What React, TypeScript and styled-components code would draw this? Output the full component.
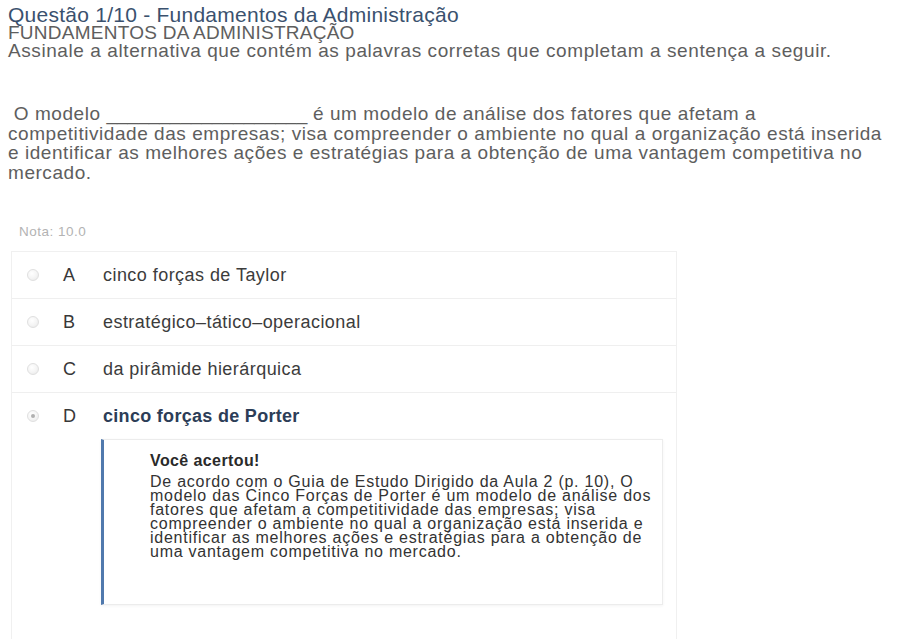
import React from "react";
import styled, { createGlobalStyle } from "styled-components";

const GlobalStyle = createGlobalStyle`
  html, body { margin: 0; padding: 0; background: #ffffff; }
  body { font-family: "Liberation Sans", Arial, sans-serif; }
`;

const Page = styled.main`
  box-sizing: border-box;
  width: 903px;
  min-height: 100vh;
  padding: 6px 8px 0 8px;
  display: flex;
  flex-direction: column;
  align-items: flex-start;
`;

const Header = styled.header`
  display: flex;
  flex-direction: column;
  line-height: 18px;
`;

const Title = styled.h1`
  margin: 0;
  font-size: 21px;
  letter-spacing: 0.25px;
  line-height: 18px;
  font-weight: normal;
  color: #3a516e;
`;

const Subtitle = styled.div`
  font-size: 19px;
  letter-spacing: 0.25px;
  color: #5e5e5e;
`;

const Prompt = styled.div`
  font-size: 19px;
  letter-spacing: 0.58px;
  color: #5e5e5e;
`;

const Statement = styled.p`
  margin: 44px 0 0 0;
  width: 880px;
  font-size: 19px;
  letter-spacing: 0.55px;
  line-height: 19.5px;
  color: #5e5e5e;
`;

const Blank = styled.span`
  letter-spacing: 0;
`;

const Grade = styled.div`
  margin: 43px 0 0 11px;
  font-size: 13.5px;
  letter-spacing: 0.5px;
  line-height: 14px;
  color: #b3b3b3;
`;

const OptionsCard = styled.section`
  flex: 1;
  margin: 12px 0 0 3px;
  width: 666px;
  box-sizing: border-box;
  border: 1px solid #f0f0f0;
  border-bottom: none;
`;

const OptionRow = styled.div<{ $last?: boolean }>`
  border-bottom: ${(p) => (p.$last ? "none" : "1px solid #efefef")};
`;

const OptionLine = styled.label`
  display: flex;
  align-items: center;
  height: 46px;
  padding-left: 15px;
`;

const Radio = styled.span<{ $checked?: boolean }>`
  position: relative;
  box-sizing: border-box;
  width: 12px;
  height: 12px;
  border-radius: 50%;
  border: 1px solid #e0e0e0;
  background: radial-gradient(circle at 40% 35%, #ffffff 0%, #f4f4f4 55%, #e6e6e6 100%);
  margin-right: 24px;
  flex-shrink: 0;
  &::after {
    content: "";
    display: ${(p) => (p.$checked ? "block" : "none")};
    position: absolute;
    left: 3px;
    top: 3px;
    width: 4px;
    height: 4px;
    border-radius: 50%;
    background: #b0b0b0;
  }
`;

const Letter = styled.span`
  width: 40px;
  font-size: 18px;
  letter-spacing: 0.45px;
  color: #383838;
`;

const OptionText = styled.span<{ $selected?: boolean }>`
  font-size: 18px;
  letter-spacing: ${(p) => (p.$selected ? "0.3px" : "0.45px")};
  color: ${(p) => (p.$selected ? "#2c3d57" : "#3c3c3c")};
  font-weight: ${(p) => (p.$selected ? "bold" : "normal")};
`;

const Feedback = styled.div`
  margin: 0 0 0 89px;
  width: 562px;
  box-sizing: border-box;
  border: 1px solid #ececec;
  border-left: 3px solid #5079ad;
  box-shadow: 0 1px 3px rgba(0, 0, 0, 0.05);
  padding: 13px 0 45px 46px;
  color: #333333;
`;

const FeedbackTitle = styled.div`
  font-size: 16px;
  letter-spacing: 0.4px;
  line-height: 16px;
  font-weight: bold;
  color: #2a2a2a;
  margin-bottom: 6px;
`;

const FeedbackBody = styled.div`
  font-size: 16px;
  letter-spacing: 0.75px;
  line-height: 14px;
`;

const options = [
  { key: "A", text: "cinco forças de Taylor" },
  { key: "B", text: "estratégico–tático–operacional" },
  { key: "C", text: "da pirâmide hierárquica" },
  { key: "D", text: "cinco forças de Porter", selected: true },
];

export default function App() {
  return (
    <>
      <GlobalStyle />
      <Page>
        <Header>
          <Title>Questão 1/10 - Fundamentos da Administração</Title>
          <Subtitle>FUNDAMENTOS DA ADMINISTRAÇÃO</Subtitle>
          <Prompt>
            Assinale a alternativa que contém as palavras corretas que completam a sentença a seguir.
          </Prompt>
        </Header>
        <Statement>
          {"\u00a0O modelo "}
          <Blank>___________________</Blank>
          {" é um modelo de análise dos fatores que afetam a competitividade das empresas; visa compreender o ambiente no qual a organização está inserida e identificar as melhores ações e estratégias para a obtenção de uma vantagem competitiva no mercado."}
        </Statement>
        <Grade>Nota: 10.0</Grade>
        <OptionsCard>
          {options.map((o, i) => (
            <OptionRow key={o.key} $last={i === options.length - 1}>
              <OptionLine>
                <Radio $checked={o.selected} />
                <Letter>{o.key}</Letter>
                <OptionText $selected={o.selected}>{o.text}</OptionText>
              </OptionLine>
              {o.selected && (
                <Feedback>
                  <FeedbackTitle>Você acertou!</FeedbackTitle>
                  <FeedbackBody>
                    De acordo com o Guia de Estudo Dirigido da Aula 2 (p. 10), O modelo das Cinco Forças de Porter é um modelo de análise dos fatores que afetam a competitividade das empresas; visa compreender o ambiente no qual a organização está inserida e identificar as melhores ações e estratégias para a obtenção de uma vantagem competitiva no mercado.
                  </FeedbackBody>
                </Feedback>
              )}
            </OptionRow>
          ))}
        </OptionsCard>
      </Page>
    </>
  );
}
